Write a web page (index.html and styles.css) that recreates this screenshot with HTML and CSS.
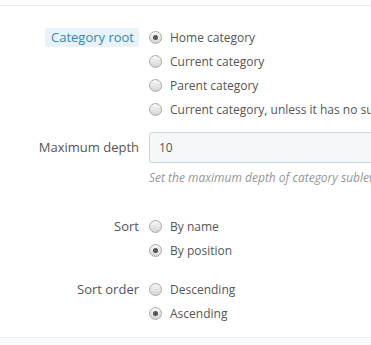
FILE: index.html
```html
<!DOCTYPE html>
<html>
<head>
<meta charset="utf-8">
<link rel="stylesheet" href="styles.css">
</head>
<body>
<div class="panel">
  <div class="form">
    <div class="group group-root">
      <div class="label"><span class="hint">Category root</span></div>
      <div class="controls">
        <label class="radio"><span class="dot checked"></span>Home category</label>
        <label class="radio"><span class="dot"></span>Current category</label>
        <label class="radio"><span class="dot"></span>Parent category</label>
        <label class="radio"><span class="dot"></span>Current category, unless it has no subcategories, in which case the parent category of the current category is used</label>
      </div>
    </div>
    <div class="group group-depth">
      <div class="label label-input">Maximum depth</div>
      <div class="controls">
        <div class="input">10</div>
        <p class="help">Set the maximum depth of category sublevels displayed in this block (0 = infinite).</p>
      </div>
    </div>
    <div class="group group-sort">
      <div class="label label-radio">Sort</div>
      <div class="controls">
        <label class="radio"><span class="dot"></span>By name</label>
        <label class="radio"><span class="dot checked"></span>By position</label>
      </div>
    </div>
    <div class="group group-order">
      <div class="label label-radio">Sort order</div>
      <div class="controls">
        <label class="radio"><span class="dot"></span>Descending</label>
        <label class="radio"><span class="dot checked"></span>Ascending</label>
      </div>
    </div>
  </div>
  <div class="footer"></div>
</div>
</body>
</html>
```
FILE: styles.css
```css
html, body {
  margin: 0;
  padding: 0;
  background: #fff;
  overflow: hidden;
}
body {
  font-family: "Open Sans", "Liberation Sans", sans-serif;
  font-size: 12px;
  color: #555;
}
.panel {
  width: 720px;
  padding-top: 5px;
}
.form {
  border-top: 1px solid #e9e9e9;
  padding-top: 19px;
  padding-bottom: 12px;
}
.group {
  display: grid;
  grid-template-columns: 139px 1fr;
  column-gap: 10px;
}
.label {
  text-align: right;
  white-space: nowrap;
  font-size: 13px;
}
.hint {
  display: inline-block;
  background: #e7f3f9;
  color: #3d85a9;
  border-radius: 3px;
  padding: 0 5px 0 6px;
  height: 19px;
  line-height: 19px;
  margin-top: 3px;
}
.label-input { line-height: 31px; }
.label-radio { line-height: 24px; }
.controls {
  display: flex;
  flex-direction: column;
}
.radio {
  display: flex;
  align-items: center;
  height: 24px;
  white-space: nowrap;
}
.dot {
  box-sizing: border-box;
  width: 13px;
  height: 13px;
  border-radius: 50%;
  border: 1px solid #aaa;
  background: linear-gradient(#f7f7f7, #d4d4d4);
  margin-right: 8px;
  flex: none;
  display: flex;
  align-items: center;
  justify-content: center;
}
.dot.checked::after {
  content: "";
  width: 5px;
  height: 5px;
  border-radius: 50%;
  background: #555;
}
.group-depth { margin-top: 11px; }
.input {
  box-sizing: border-box;
  height: 31px;
  border: 1px solid #c7d6db;
  border-radius: 3px;
  background: #f5f8f9;
  padding-left: 9px;
  line-height: 29px;
  color: #555;
}
.help {
  margin: 7px 0 0;
  font-style: italic;
  color: #959595;
  line-height: 16px;
  white-space: nowrap;
}
.group-sort { margin-top: 28px; }
.group-order { margin-top: 15px; }
.footer {
  border-top: 1px solid #eee;
  background: #fafbfc;
  height: 20px;
}
```
